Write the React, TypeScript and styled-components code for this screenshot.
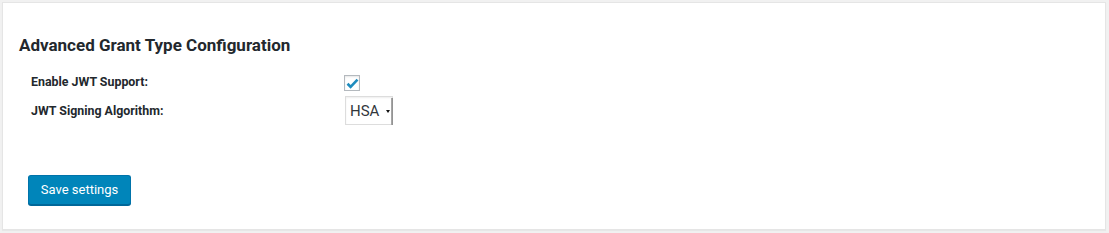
import styled, { createGlobalStyle } from "styled-components";

const GlobalStyle = createGlobalStyle`
  html, body {
    margin: 0;
    padding: 0;
    background: #f1f1f1;
  }
  body {
    font-family: Roboto, "Liberation Sans", Arial, sans-serif;
    color: #23282d;
  }
`;

const Page = styled.div`
  padding: 2px 3px 4px 2px;
`;

const Panel = styled.div`
  background: #fff;
  border: 1px solid #e5e5e5;
  box-shadow: 0 1px 1px rgba(0, 0, 0, 0.04);
  height: 226px;
  box-sizing: content-box;
  padding: 0 16px;
  display: flex;
  flex-direction: column;
`;

const Heading = styled.h2`
  margin: 32px 0 0 0;
  font-size: 17px;
  line-height: 20px;
  font-weight: 700;
  color: #23282d;
`;

const FormTable = styled.div`
  margin: 18px 0 0 12px;
  display: flex;
  flex-direction: column;
`;

const FieldRow = styled.div<{ $height: number }>`
  display: flex;
  align-items: flex-start;
  height: ${({ $height }) => $height}px;
`;

const Label = styled.div<{ $offset: number }>`
  width: 313px;
  flex: 0 0 313px;
  padding-top: ${({ $offset }) => $offset}px;
  font-size: 12.4px;
  line-height: 14px;
  font-weight: 700;
  color: #23282d;
`;

const Checkbox = styled.span`
  margin-top: 2px;
  width: 16px;
  height: 16px;
  box-sizing: border-box;
  border: 1px solid #b4b9be;
  background: #fff;
  box-shadow: inset 0 1px 2px rgba(0, 0, 0, 0.1);
  display: inline-flex;
  align-items: center;
  justify-content: center;
`;

const SelectBox = styled.div`
  position: relative;
  margin: 1px 0 0 1px;
  width: 48px;
  height: 29px;
  box-sizing: border-box;
  border: 1px solid #ddd;
  box-shadow: inset 0 1px 2px rgba(0, 0, 0, 0.07);
  background: #fff;
  display: flex;
  align-items: center;
  padding-left: 4px;
  font-size: 15px;
  color: #32373c;
`;

const Arrow = styled.span`
  position: absolute;
  right: 2px;
  top: 13px;
  width: 0;
  height: 0;
  border-left: 2.5px solid transparent;
  border-right: 2.5px solid transparent;
  border-top: 3px solid #111;
`;

const ScrollEdge = styled.span`
  position: absolute;
  right: -1px;
  top: 1px;
  bottom: -1px;
  width: 2px;
  background: linear-gradient(to right, #b0b0b0, #8a8a8a);
`;

const SaveButton = styled.button`
  margin: 50px 0 0 9px;
  align-self: flex-start;
  height: 30px;
  width: 103px;
  padding: 0;
  border: 1px solid #0073aa;
  border-bottom-color: #006799;
  border-radius: 3px;
  background: #0085ba;
  box-shadow: 0 1px 0 #006799;
  color: #fff;
  font-family: Roboto, "Liberation Sans", Arial, sans-serif;
  font-size: 13px;
  line-height: 28px;
  cursor: pointer;
`;

export default function App() {
  return (
    <>
      <GlobalStyle />
      <Page>
        <Panel>
          <Heading>Advanced Grant Type Configuration</Heading>
          <FormTable>
            <FieldRow $height={22}>
              <Label $offset={2}>Enable JWT Support:</Label>
              <Checkbox>
                <svg width="13" height="11" viewBox="0 0 13 11">
                  <path
                    d="M1.5 5.8 L4.6 8.8 L11.5 1.6"
                    fill="none"
                    stroke="#1e8cbe"
                    strokeWidth="2.6"
                  />
                </svg>
              </Checkbox>
            </FieldRow>
            <FieldRow $height={30}>
              <Label $offset={9}>JWT Signing Algorithm:</Label>
              <SelectBox>
                HSA
                <Arrow />
                <ScrollEdge />
              </SelectBox>
            </FieldRow>
          </FormTable>
          <SaveButton>Save settings</SaveButton>
        </Panel>
      </Page>
    </>
  );
}
